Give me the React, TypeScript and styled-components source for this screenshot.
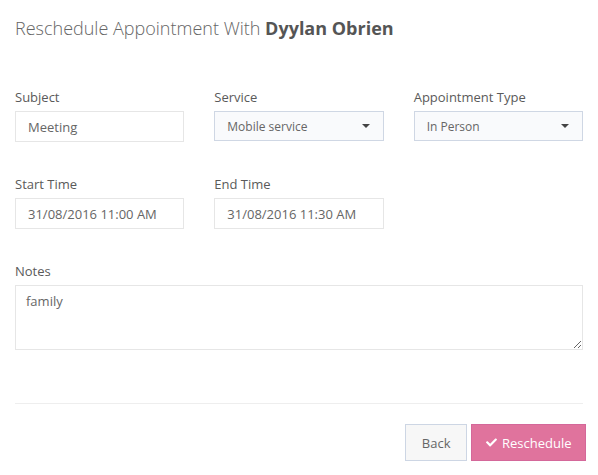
import React from "react";
import styled, { createGlobalStyle } from "styled-components";
import { FaCheck } from "react-icons/fa";

const Global = createGlobalStyle`
  html, body { margin: 0; padding: 0; background: #fff; }
  body { font-family: "Open Sans", "Liberation Sans", sans-serif; color: #555; }
  * { box-sizing: border-box; }
`;

const Page = styled.div`
  width: 598px;
  padding: 14px 15px 0 15px;
`;

const Title = styled.h1`
  margin: 0;
  font-size: 18px;
  line-height: 28px;
  font-weight: 300;
  color: #666;
  b { font-weight: 700; color: #555; }
`;

const Grid = styled.div`
  display: grid;
  grid-template-columns: repeat(3, 1fr);
  column-gap: 30px;
  row-gap: 33px;
  margin-top: 46px;
`;

const Field = styled.div<{ $span?: number }>`
  display: flex;
  flex-direction: column;
  grid-column: span ${(p) => p.$span ?? 1};
`;

const Label = styled.label`
  font-size: 13px;
  line-height: 18px;
  color: #5a5a5a;
  margin-bottom: 5px;
`;

const Input = styled.div`
  height: 31px;
  border: 1px solid #e6e6e6;
  background: #fff;
  padding: 0 12px;
  display: flex;
  align-items: center;
  font-size: 13px;
  color: #666;
`;

const Select = styled.div`
  height: 30px;
  border: 1px solid #cfd7e4;
  background: #f9fafc;
  padding: 0 12px;
  display: flex;
  align-items: center;
  justify-content: space-between;
  font-size: 12px;
  color: #666;
`;

const Caret = styled.span`
  width: 0;
  height: 0;
  border-left: 4px solid transparent;
  border-right: 4px solid transparent;
  border-top: 4px solid #444;
  margin-right: 1px;
`;

const TextArea = styled.textarea`
  height: 65px;
  border: 1px solid #e6e6e6;
  padding: 6px 10px;
  font-family: "Open Sans", "Liberation Sans", sans-serif;
  font-size: 13px;
  line-height: 18px;
  color: #666;
  resize: vertical;
  outline: none;
  display: block;
  width: 100%;
`;

const Divider = styled.hr`
  margin: 53px 0 0 0;
  border: 0;
  border-top: 1px solid #eeeeee;
`;

const Footer = styled.div`
  display: flex;
  justify-content: flex-end;
  gap: 4px;
  margin-top: 20px;
  margin-right: -3px;
`;

const Button = styled.button<{ $primary?: boolean }>`
  height: 37px;
  padding: 0 ${(p) => (p.$primary ? "13.5px" : "16px")};
  font-family: "Open Sans", "Liberation Sans", sans-serif;
  font-size: 13px;
  display: flex;
  align-items: center;
  gap: 5px;
  border: 1px solid ${(p) => (p.$primary ? "#d4689a" : "#cdd6e4")};
  background: ${(p) => (p.$primary ? "#e0739d" : "#f7f7f7")};
  color: ${(p) => (p.$primary ? "#fff" : "#666")};
  cursor: pointer;
`;

export default function App() {
  return (
    <Page>
      <Global />
      <Title>
        Reschedule Appointment With <b>Dyylan Obrien</b>
      </Title>
      <Grid>
        <Field>
          <Label>Subject</Label>
          <Input>Meeting</Input>
        </Field>
        <Field>
          <Label>Service</Label>
          <Select>
            Mobile service
            <Caret />
          </Select>
        </Field>
        <Field>
          <Label>Appointment Type</Label>
          <Select>
            In Person
            <Caret />
          </Select>
        </Field>
        <Field>
          <Label>Start Time</Label>
          <Input>31/08/2016 11:00 AM</Input>
        </Field>
        <Field>
          <Label>End Time</Label>
          <Input>31/08/2016 11:30 AM</Input>
        </Field>
        <div />
        <Field $span={3}>
          <Label>Notes</Label>
          <TextArea defaultValue="family" />
        </Field>
      </Grid>
      <Divider />
      <Footer>
        <Button>Back</Button>
        <Button $primary>
          <FaCheck size={11} />
          Reschedule
        </Button>
      </Footer>
    </Page>
  );
}
